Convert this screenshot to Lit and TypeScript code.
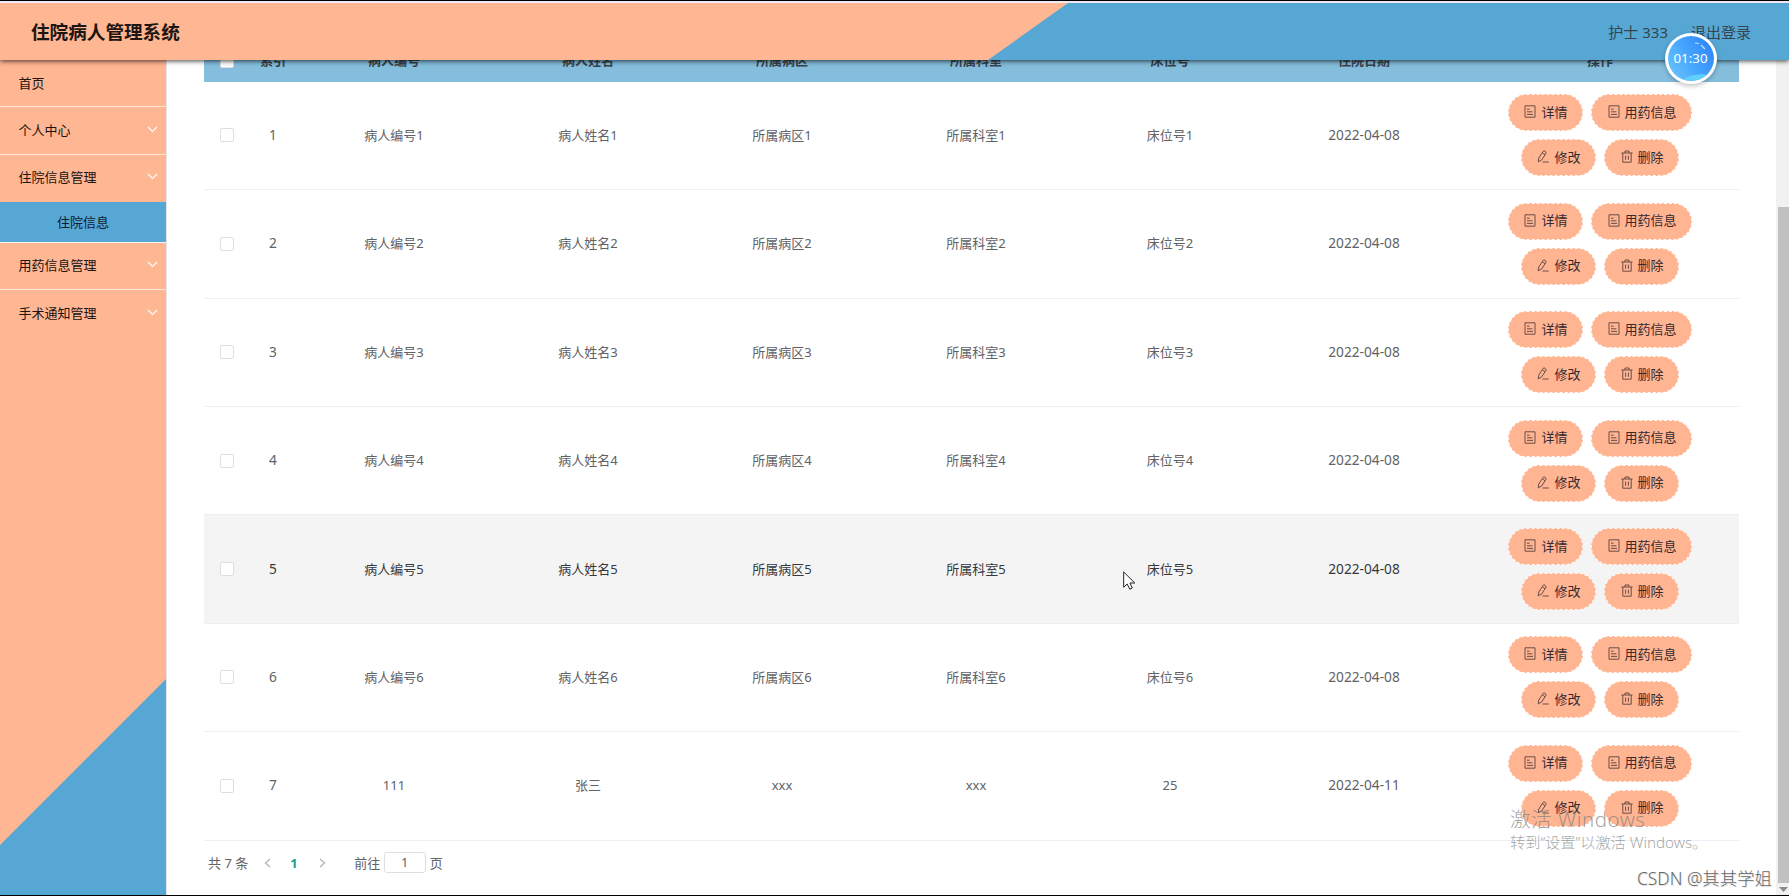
import { LitElement, html, css, svg } from "lit";
import { customElement } from "lit/decorators.js";

interface Row {
  cells: string[];
  date: string;
}

const ROWS: Row[] = [
  ...[1, 2, 3, 4, 5, 6].map((n) => ({
    cells: [`病人编号${n}`, `病人姓名${n}`, `所属病区${n}`, `所属科室${n}`, `床位号${n}`],
    date: "2022-04-08",
  })),
  { cells: ["111", "张三", "xxx", "xxx", "25"], date: "2022-04-11" },
];

const HEADS = ["病人编号", "病人姓名", "所属病区", "所属科室", "床位号", "住院日期"];

const doc = svg`<path d="M1 .8h10v11.4H1z"/><path d="M3 4.2h2.6M3 6.8h5.4M3 9.4h6"/>`;
const pen = svg`<path d="M1.200 11.800 1.800 8 6.200 1.300Q7 .5 8 1.200T9.100 3.200L4.600 10 1.200 11.800zM5.300 2.800l2.700 1.800M5.500 12h6.200"/>`;
const bin = svg`<path d="M.4 3h11.2M1.8 3v9.2h8.4V3M4 3V1h4v2M4.6 5.6v4.2M7.4 5.6v4.2"/>`;

const icon = (shape: unknown) => html`<svg class="ico" viewBox="0 0 12 13">${shape}</svg>`;
const button = (shape: unknown, label: string) =>
  html`<button class="btn">${icon(shape)}<span>${label}</span></button>`;

@customElement("app-root")
export class AppRoot extends LitElement {
  static styles = css`
    :host {
      display: flex;
      flex-direction: column;
      position: relative;
      width: 1789px;
      height: 896px;
      box-sizing: border-box;
      border-top: 1px solid #000;
      border-bottom: 1px solid #000;
      overflow: hidden;
      background: #fff;
      font-family: "Noto Sans", "Noto Sans CJK SC", sans-serif;
      font-size: 13px;
      color: #606266;
    }
    * { box-sizing: border-box; }
    .top {
      flex: none;
      height: 59px;
      border-top: 2px solid #eee9f3;
      display: flex;
      align-items: center;
      justify-content: space-between;
      padding: 0 38px 0 31px;
      position: relative;
      z-index: 2;
      box-shadow: 0 1px 5px rgba(0, 0, 0, 0.75);
    }
    .topbg { position: absolute; inset: 0; width: 100%; height: 100%; }
    .title { position: relative; font-size: 18.6px; font-weight: 700; color: #1d1511; line-height: 24px; }
    .user { position: relative; display: flex; gap: 23px; font-size: 15px; color: #35454f; margin-top: -1px; }
    .body { flex: 1; display: flex; min-height: 0; }
    .side {
      flex: none;
      width: 166px;
      background: #ffb693;
      display: flex;
      flex-direction: column;
      color: #201410;
    }
    .item {
      height: 47.4px;
      flex: none;
      padding: 0 8px 2px 18.5px;
      display: flex;
      align-items: center;
      justify-content: space-between;
      border-bottom: 1.5px solid #fde6da;
    }
    .item.bare { border-bottom-color: #ffb693; }
    .item.open { height: 47px; }
    .sub {
      height: 41px;
      flex: none;
      background: #57a7d4;
      border-bottom: 1.5px solid #f4f4f4;
      display: flex;
      align-items: center;
      justify-content: center;
      padding-bottom: 1px;
      color: #10202c;
    }
    .chev { width: 11px; height: 7px; fill: none; stroke: #fff; stroke-width: 1.1; }
    .corner { margin-top: auto; display: block; width: 166px; height: 216px; fill: #57a7d4; }
    .main { flex: 1; overflow: hidden; border-left: 1px solid #e3e5ea; padding-left: 37px; }
    .row {
      width: 1535px;
      height: 108.42px;
      display: grid;
      grid-template-columns: 45px 48px repeat(6, 194px) 278px;
      align-items: center;
      justify-items: center;
      border-bottom: 1px solid #ebeef5;
      line-height: 20px;
    }
    .row > span { margin-top: -1px; }
    .row.head { height: 40.7px; margin-top: -19px; background: #85bedd; border: 0; font-weight: 700; color: #38434c; }
    .row.head > span { margin-top: -2px; }
    .row.hover { background: #f4f4f4; color: #35383d; }
    .box { width: 14px; height: 14px; border: 1px solid #dcdfe6; border-radius: 2px; background: #fff; }
    .num { font-size: 13.7px; }
    .ops { display: flex; flex-wrap: wrap; justify-content: center; gap: 8px; width: 200px; }
    .btn {
      height: 37px;
      border: 1px dashed #fff8f4;
      border-radius: 19px;
      background: #ffb492;
      padding: 0 14.5px 0 15.5px;
      display: flex;
      align-items: center;
      gap: 5px;
      font: inherit;
      line-height: 18px;
      color: #352a30;
    }
    .btn span { margin-top: -2px; }
    .ico { width: 12px; height: 13px; fill: none; stroke: #5b4340; stroke-width: 0.9; margin-top: -2px; }
    .pager { display: flex; align-items: center; height: 44px; padding-left: 4px; }
    .arrow { width: 7px; height: 10px; fill: none; stroke: #b0b4bd; stroke-width: 1.3; }
    .arrow.prev { margin-left: 15.5px; }
    .cur { color: #1f9e8c; font-weight: 700; margin: 0 21.5px 0 19.5px; }
    .go { margin: 0 3.5px 0 28px; }
    .inp {
      width: 42px;
      height: 21px;
      border: 1px solid #dcdfe6;
      border-radius: 3px;
      text-align: center;
      line-height: 19px;
      margin-right: 4px;
    }
    .bar { flex: none; width: 13px; background: #f1f1f1; display: flex; flex-direction: column; padding: 147px 0 0 2px; }
    .thumb { height: 676px; background: #c1c1c1; }
    .down { width: 9px; height: 5px; margin: 4px 0 0 1px; fill: #8a8a8a; }
    .ball {
      position: absolute;
      z-index: 3;
      left: 1664.5px;
      top: 32px;
      width: 52px;
      height: 51px;
      border: 3px solid #fff;
      border-radius: 50%;
      background: linear-gradient(60deg, #66c0fc 10%, #45a5fd 50%, #2f86fb 90%);
      box-shadow: 0 2px 5px rgba(0, 0, 0, 0.25);
      overflow: hidden;
      color: #fff;
      font-size: 13.3px;
      line-height: 44px;
      text-align: center;
    }
    .ball svg { position: absolute; inset: 0; width: 100%; height: 100%; }
    .ball span { position: relative; }
    .cursor { position: absolute; left: 1123px; top: 570px; width: 13px; height: 20px; }
    .mark { position: absolute; white-space: nowrap; font-weight: 300; color: rgba(125, 125, 125, 0.7); }
    .m1 { left: 1510px; top: 804px; font-size: 20.5px; letter-spacing: 0.5px; line-height: 28px; }
    .m2 { left: 1510px; top: 830px; font-size: 15.2px; line-height: 22px; }
    .m3 { left: 1637px; top: 864px; font-size: 17.4px; line-height: 26px; color: #666; text-shadow: 1px 1px 1px #ddd; }
  `;

  private item(label: string, arrow = true, extra = "") {
    return html`<div class="item ${extra}">
      <span>${label}</span>
      ${arrow ? html`<svg class="chev" viewBox="0 0 11 7"><path d="M1 1l4.500 4.500L10 1" /></svg>` : ""}
    </div>`;
  }

  render() {
    return html`
      <header class="top">
        <svg class="topbg" viewBox="0 0 1789 57" preserveAspectRatio="none">
          <path fill="#57a7d4" d="M0 0h1789v57H0z" />
          <path fill="#ffb693" d="M0 0h1068L988 57H0z" />
        </svg>
        <div class="title">住院病人管理系统</div>
        <div class="user"><span>护士 333</span><span>退出登录</span></div>
      </header>
      <div class="body">
        <nav class="side">
          ${this.item("首页", false)} ${this.item("个人中心")} ${this.item("住院信息管理", true, "bare open")}
          <div class="sub">住院信息</div>
          ${this.item("用药信息管理")} ${this.item("手术通知管理", true, "bare")}
          <svg class="corner" viewBox="0 0 166 216"><path d="M166 0v216H0v-50z" /></svg>
        </nav>
        <main class="main">
          <div class="row head">
            <i class="box"></i><span>索引</span>
            ${HEADS.map((h) => html`<span>${h}</span>`)}<span>操作</span>
          </div>
          ${ROWS.map(
            (r, i) => html`<div class="row ${i === 4 ? "hover" : ""}">
              <i class="box"></i><span class="num">${i + 1}</span>
              ${r.cells.map((c) => html`<span>${c}</span>`)}
              <span class="num">${r.date}</span>
              <div class="ops">
                ${button(doc, "详情")}${button(doc, "用药信息")}${button(pen, "修改")}${button(bin, "删除")}
              </div>
            </div>`
          )}
          <div class="pager">
            <span>共 7 条</span>
            <svg class="arrow prev" viewBox="0 0 7 10"><path d="M6 1L1.500 5 6 9" /></svg>
            <span class="cur">1</span>
            <svg class="arrow" viewBox="0 0 7 10"><path d="M1 1l4.500 4L1 9" /></svg>
            <span class="go">前往</span><span class="inp">1</span><span>页</span>
          </div>
        </main>
        <div class="bar">
          <div class="thumb"></div>
          <svg class="down" viewBox="0 0 9 5"><path d="M0 0h9L4.500 5z" /></svg>
        </div>
      </div>
      <div class="ball">
        <svg viewBox="0 0 46 44">
          <path fill="#5fd0fb" d="M14 44c6-5 14-7 24-6v6z" />
          <path fill="none" stroke="#bfe4ff" stroke-width="1.1" d="M27 6.500l4 .5M33 8.500l4 4" />
        </svg>
        <span>01:30</span>
      </div>
      <svg class="cursor" viewBox="0 0 13 20">
        <path fill="#fff" stroke="#222" d="M.7 1v15.200l3.500-3.200 2.600 5.200 2.500-1.200-2.400-5h4.900z" />
      </svg>
      <div class="mark m1">激活 Windows</div>
      <div class="mark m2">转到“设置”以激活 Windows。</div>
      <div class="mark m3">CSDN @其其学姐</div>
    `;
  }
}
